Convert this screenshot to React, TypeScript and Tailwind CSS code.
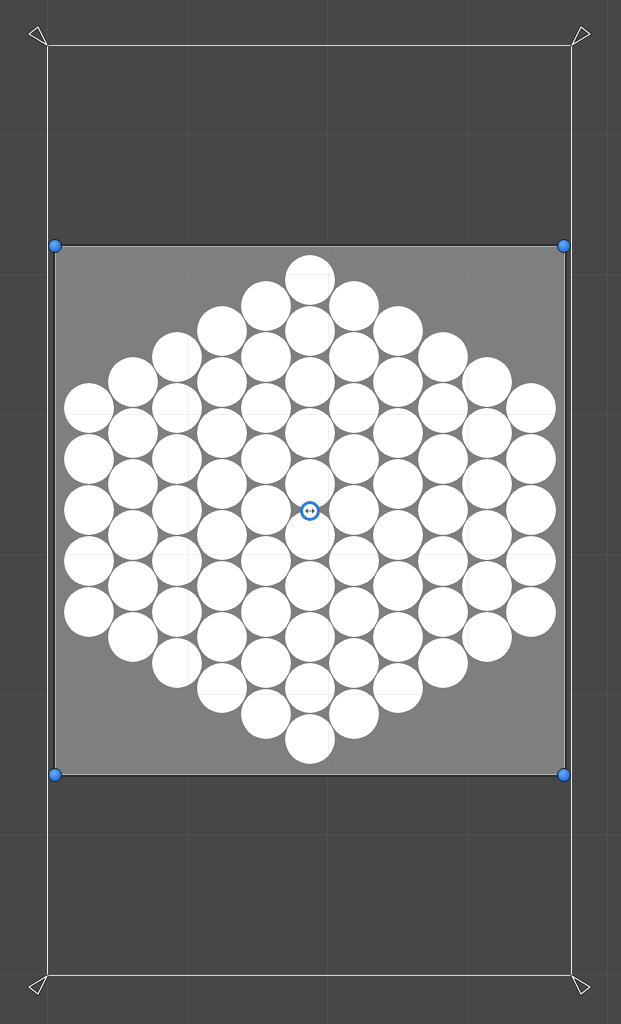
const COLS = [5, 6, 7, 8, 9, 10, 9, 8, 7, 6, 5];

const GRID =
  "bg-[linear-gradient(to_right,rgba(150,150,150,0.13)_1px,transparent_1px),linear-gradient(to_bottom,rgba(150,150,150,0.13)_1px,transparent_1px)] bg-[size:140px_140px]";

function Circle() {
  return <div className="h-[50px] w-[50px] shrink-0 rounded-full bg-white shadow-[0_0_1px_rgba(0,0,0,0.6)]" />;
}

function Handle({ className }: { className: string }) {
  return (
    <div
      className={`absolute z-20 h-[14px] w-[14px] rounded-full border border-[#1b1b1b] bg-[radial-gradient(circle_at_40%_35%,#6aaeff,#2f7fe8_55%,#1b5fc4)] ${className}`}
    />
  );
}

// anchor triangle, drawn for the top-left corner and flipped for the others
function Anchor({ className }: { className: string }) {
  return (
    <svg width="28" height="28" viewBox="0 0 28 28" className={`absolute ${className}`}>
      <polygon points="23,23 5,12 14,5" fill="none" stroke="#1e1e1e" strokeWidth="3" strokeLinejoin="round" />
      <polygon points="23,23 5,12 14,5" fill="none" stroke="#f2f2f2" strokeWidth="1.3" strokeLinejoin="round" />
    </svg>
  );
}

export default function App() {
  return (
    <div className={`relative h-[1024px] w-[621px] overflow-hidden bg-[#474747] ${GRID} bg-[position:47px_134px]`}>
      {/* rect transform bounds */}
      <div className="absolute left-[47px] top-[45px] flex h-[931px] w-[525px] items-center justify-center border border-x-[#ececec] border-y-[#d4d4d4] pl-[1px]">
        <Anchor className="-left-[24px] -top-[24px]" />
        <Anchor className="-right-[24px] -top-[24px] scale-x-[-1]" />
        <Anchor className="-bottom-[24px] -left-[24px] scale-y-[-1]" />
        <Anchor className="-bottom-[24px] -right-[24px] scale-x-[-1] scale-y-[-1]" />

        {/* sprite */}
        <div className="relative flex h-[529px] w-[510px] shrink-0 items-center justify-center border border-[#b0b0b0] bg-[#7f7f7f] pb-[2px] shadow-[0_0_0_2px_#2e2e2e]">
          <div className="flex items-center">
            {COLS.map((n, i) => (
              <div key={i} className="-mx-[2.9px] flex flex-col gap-[1px]">
                {Array.from({ length: n }).map((_, j) => (
                  <Circle key={j} />
                ))}
              </div>
            ))}
          </div>

          {/* the scene grid is drawn over the sprite as well */}
          <div className={`pointer-events-none absolute inset-0 ${GRID} bg-[position:132px_27px]`} />

          <Handle className="-left-[8px] -top-[8px]" />
          <Handle className="-right-[7px] -top-[8px]" />
          <Handle className="-bottom-[8px] -left-[8px]" />
          <Handle className="-bottom-[8px] -right-[7px]" />

          {/* pivot */}
          <div className="absolute left-1/2 top-1/2 z-20 flex h-[20px] w-[20px] -translate-x-1/2 -translate-y-1/2 items-center justify-center rounded-full border-[3px] border-[#2b78e4] bg-white">
            <svg width="10" height="6" viewBox="0 0 10 6">
              <polygon points="0,3 3,0.5 3,5.5" fill="#555" />
              <polygon points="10,3 7,0.5 7,5.5" fill="#555" />
              <rect x="3" y="2.5" width="4" height="1" fill="#777" />
            </svg>
          </div>
        </div>
      </div>
    </div>
  );
}
